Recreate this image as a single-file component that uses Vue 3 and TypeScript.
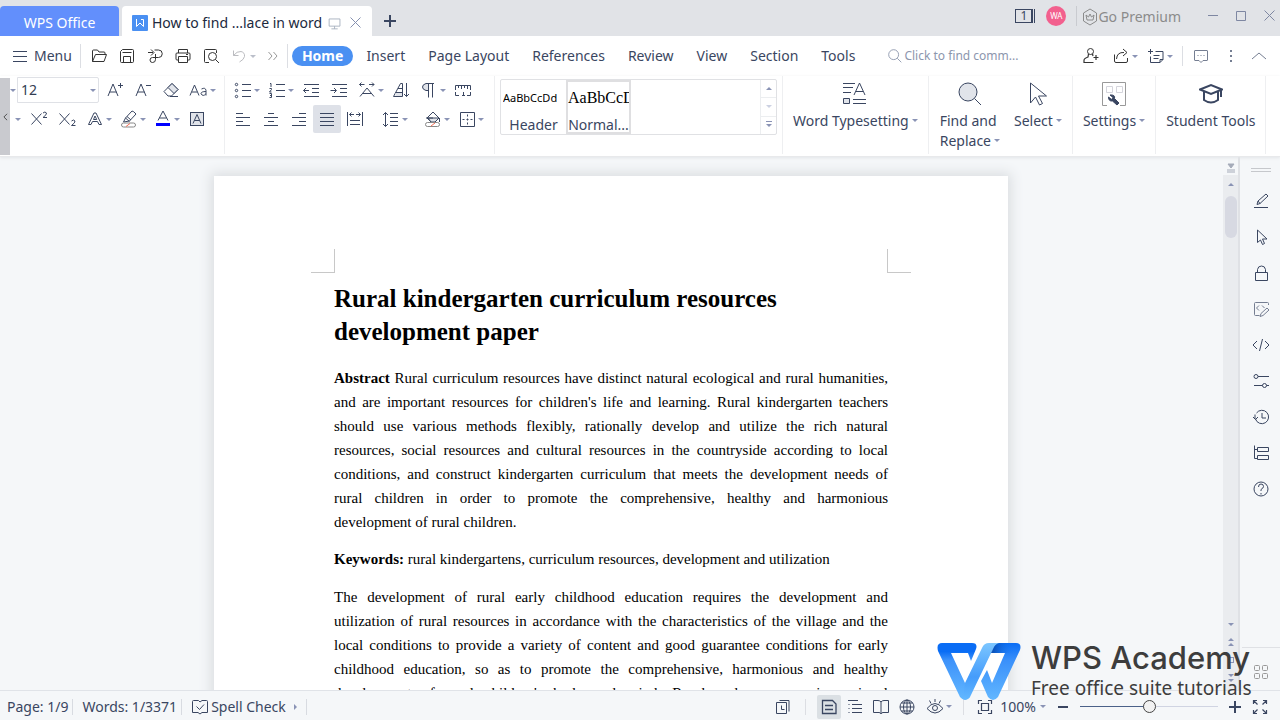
<script setup lang="ts">
import { ref } from 'vue'

interface Tool {
  icon: string
  label: string
  caret?: boolean
  active?: boolean
  spaced?: boolean
}

const lines = (rows: number[][]): string => rows.map(([x, y, w]) => `<path d="M${x} ${y}.5h${w}"/>`).join('')

const icons: Record<string, string> = {
  present: '<path d="M3.5 5.500h12v8h-12zM9.500 13.500v3M6 16.500h7"/>',
  close: '<path d="M4.500 4.500l10 10M14.500 4.500l-10 10"/>',
  plus: '<path d="M10 4v12M4 10h12" stroke-width="2"/>',
  minus: '<path d="M5 10h10" stroke-width="2"/>',
  minimize: '<path d="M5 9.500h10"/>',
  maximize: '<path d="M5.500 5.500h9v9h-9z"/>',
  menu: lines([[3, 5, 14], [3, 10, 14], [3, 15, 14]]),
  open: '<path d="M3.500 15.500V5q0-1 1-1h4l1.500 2h5q1 0 1 1v1.500M3.500 15.500l3-7h11l-2.500 7z"/>',
  save: '<path d="M3.500 5.500l2-2h10q1 0 1 1v11q0 1-1 1h-11q-1 0-1-1zM5.500 6.500h9M6.500 16v-5.500h7V16"/>',
  output: '<path d="M3 6.500h5M6 3.500l3 3-3 3M9.500 4h4a3.500 3.500 0 010 7.500h-6a2.500 2.500 0 100 5q3 0 3-3V8"/>',
  print: '<path d="M5.500 7V3.500h9V7M5 14H4q-1 0-1-1V8q0-1 1-1h12q1 0 1 1v5q0 1-1 1h-1M5.500 10.500h9v6h-9zM13 8.500h2"/>',
  preview: '<path d="M8 16.500H4.500q-1 0-1-1v-11q0-1 1-1h10q1 0 1 1V7"/><circle cx="11.500" cy="10.500" r="4"/><path d="M14.500 13.500l3.500 3.500"/>',
  undo: '<path d="M4.500 4.500v5h5M4.500 9.500Q8 5 12 5.500q4 1 3.500 5-.5 3-5 5.500"/>',
  more: '<path d="M5.500 6l3.500 4-3.500 4M10.500 6l3.500 4-3.500 4"/>',
  search: '<circle cx="8.500" cy="8.500" r="5.500"/><path d="M12.500 12.500l4.500 4.500"/>',
  user: '<circle cx="9.500" cy="5.500" r="3"/><path d="M7.500 8l-.5 3Q2.500 12.500 3 15v1.500h9.500M11.500 8l.5 2M15 9v5M12.500 11.500h5" stroke-width="1.200"/>',
  share: '<path d="M3.500 8.500v6.500q0 1.500 1.500 1.500h10q1.500 0 1.500-1.500v-3M5.500 13Q6 6 13 6.500M12 3l4 3.500-4 3.500"/>',
  addnote: '<path d="M4.500 3v5M2 5.500h5M9.500 5.500h7.500v8l-3 3H4.500v-6M7.500 9.500h6M7.500 12.500h5M14 16.500v-3h3"/>',
  chat: '<path d="M4 4.500h12q.5 0 .5.500v9q0 .5-.5.500h-4l-2 2-2-2H4q-.5 0-.5-.5V5q0-.5.500-.5zM6.500 9.500h1M9.500 9.500h1M12.500 9.500h1"/>',
  dots: '<path d="M10 4v2M10 9v2M10 14v2" stroke-width="2"/>',
  up: '<path d="M3 13l7-6 7 6"/>',
  fontUp: '<path d="M3 16L8 4l5 12M4.500 12h7M15.500 3v5M13 5.500h5"/>',
  fontDown: '<path d="M3 16L8 4l5 12M4.500 12h7M13 5.500h5"/>',
  eraser: '<path d="M3 11.500l8-8 6 6-6.500 6.500H7zM9 16.500h8"/><path d="M7 7.500l4-4 6 6-4 4z" fill="#e1e4ea"/>',
  aa: '<path d="M1 15.500L5.500 5l4.500 10.500M3 12h5M12.500 9q4-2 4.500 1.500v5M17 11.500q-5 0-5 2.200 2 3.500 5 0"/>',
  sup: '<path d="M2.500 4.500l10 11M12.500 4.500l-10 11M14 4q2-2 3.500 0 .5 1.500-3.500 4.500h4"/>',
  sub: '<path d="M2.500 4.500l10 11M12.500 4.500l-10 11M14.500 12q2-2 3.500 0 .5 1.500-3.500 4.500h4"/>',
  textfx: '<path d="M3.500 15.500L9 4h2l5.500 11.500h-2.500l-1.500-3h-5l-1.500 3zM8.500 10.500L10 7l1.700 3.500z"/>',
  marker: '<path d="M4.500 13l2-4 6.500-7q1.500 0 4 3l-6.500 7zM6.500 9l4 3.500M8 7.500l4 3.500"/><rect x="2.500" y="14" width="14" height="4" rx="2" stroke="#888"/><path d="M7 17.500l4-3" stroke="#f56e55"/>',
  color: '<path d="M5 11.500L10 2l5 9.500M6.500 9h7"/><path d="M3 15.500h14" stroke="#0000ff" stroke-width="3"/>',
  boxA: '<rect x="3.500" y="3.500" width="13" height="13" fill="#e1e4ea"/><path d="M6 14.500l4-9 4 9M7.500 11.500h5"/>',
  bullets: '<circle cx="3.500" cy="4.500" r="1.200"/><circle cx="3.500" cy="10.500" r="1.200"/><circle cx="3.500" cy="16.500" r="1.200"/>' + lines([[9, 4, 9], [9, 10, 9], [9, 16, 9]]),
  numbers: '<path d="M3 3.500h1V7M2.500 8.500h2v1l-2 2.500h2M2.500 13.500h2v4h-2M3 15.500h1.500"/>' + lines([[9, 4, 9], [9, 10, 9], [9, 16, 9]]),
  outdent: lines([[3, 4, 15], [11, 8, 7], [11, 12, 7], [3, 16, 15]]) + '<path d="M2.500 10.500H8M5 8l-2.500 2.500L5 13"/>',
  indent: lines([[3, 4, 15], [11, 8, 7], [11, 12, 7], [3, 16, 15]]) + '<path d="M1.500 10.500H7M5 8l2.500 2.500L5 13"/>',
  scale: '<path d="M2.500 4.500h5M4.500 2.500l-2 2 2 2M12 4.500h5M15 2.500l2 2-2 2M3 16.500L10 8l7 8.500M6 13.500h8"/>',
  sort: '<path d="M2.500 16.500L9.500 3.500h2v13z" /><path d="M4.500 16v-3h6.500v3z" fill="#e1e4ea" stroke="none"/><path d="M4.500 12.500h7M7 8.500h4.500M15.500 3v13.500M13 14l2.500 2.500L18 14"/>',
  para: '<path d="M9.500 3.500H7q-3.500 1-3.500 3.500T7 10.500h2.500z" fill="#e1e4ea"/><path d="M9 3.500h6M9.500 3.500v14M13.500 3.500v14"/>',
  ruler: '<path d="M2.500 10V5.500h15V10M5.500 6v2M8.500 6v3M11.500 6v2M14.500 6v3M2.500 12v3.500H6M14 15.500h3.500V12M9 15.500h3M10.500 12v3"/>',
  alignL: lines([[3, 4, 7], [3, 8, 14], [3, 12, 7], [3, 16, 14]]),
  alignC: lines([[7, 4, 6], [3, 8, 14], [7, 12, 6], [3, 16, 14]]),
  alignR: lines([[10, 4, 7], [3, 8, 14], [10, 12, 7], [3, 16, 14]]),
  alignJ: lines([[3, 4, 14], [3, 8, 14], [3, 12, 14], [3, 16, 14]]),
  spread: '<path d="M2.500 3v14M17.500 3v14M4.500 5.500H9M6.500 3.500l-2 2 2 2M11 5.500h4.500M13.500 3.500l2 2-2 2M5 11.500h10M5 15.500h10"/>',
  spacing: '<path d="M4.500 3.500v14M2 6l2.500-2.500L7 6M2 15l2.500 2.500L7 15"/>' + lines([[9, 4, 8], [9, 8, 8], [9, 12, 8], [9, 16, 8]]),
  fill: '<path d="M4 9l6-6 6 6-4 4H8z" /><path d="M5 9h11l-4 4H8z" fill="#e1e4ea"/><path d="M3 9h7M16.500 9v4"/><rect x="2.500" y="13.500" width="14" height="4" rx="2" stroke="#888"/><path d="M8 17l4-3" stroke="#f56e55"/>',
  border: '<path d="M3.500 3.500h14v14h-14z"/><path d="M10.500 5.500v10M5.500 10.500h10" stroke-dasharray="2 2"/>',
  read: '<path d="M3 16.500h14M6 13.500l1-3.500 8-7 2 2-8 7.500zM7 10l2 2.500"/>',
  pointer: '<path d="M6.500 3v12.500l3-2.500 2 4.500 2-1-2-4.500h4.500z"/>',
  lock: '<path d="M4.500 9.500h12v8h-12zM6.500 9V6.500Q7 3 10.500 3t4 3.500V9"/>',
  codeEdit: '<path d="M8.500 16.500h-4q-1 0-1-1v-11q0-1 1-1h12q1 0 1 1V6M8 6.500L5.500 9 8 11.500M11 6.500L13.500 9M9 17.500l1-3 6-5.500 2 2-6 5.500z"/>',
  code: '<path d="M6 6l-4 4 4 4M14 6l4 4-4 4M11.500 4l-3 12"/>',
  sliders: '<circle cx="5" cy="5.500" r="2"/><circle cx="13.500" cy="14.500" r="2"/><path d="M7 5.500h11M3 14.500h8.500M15.500 14.500H18"/>',
  history: '<path d="M4.500 12a6.700 6.700 0 101-6M4 7.500V12M2 10l2.500 2.500L7 10M11 6v5h4"/>',
  tree: '<path d="M3.500 2.500v13h3M3.500 6.500h3M6.500 4.500h11v4h-11zM6.500 12.500h11v4h-11z"/>',
  help: '<circle cx="10" cy="10" r="7"/><path d="M7.500 8q0-3 2.500-3t2.500 2.500q0 1.500-2.500 3V12M10 14v1.500"/>',
  apps: '<rect x="3.500" y="3.500" width="5" height="5" rx="1"/><rect x="11.500" y="3.500" width="5" height="5" rx="1"/><rect x="3.500" y="11.500" width="5" height="5" rx="1"/><rect x="11.500" y="11.500" width="5" height="5" rx="1"/>',
  spell: '<path d="M8.500 3.500h-5q-1 0-1 1v11H8l2 1.500 2-1.500h5.500v-11q0-1-1-1H12l-2 1.500-1.500-1.500M6.500 9.500l3 3 4.500-5"/>',
  backup: '<path d="M3.500 5.500h10v11h-10zM6.500 3.500h9.500v11M8.500 8.500v4h3"/>',
  pageView: '<path d="M3.500 3.500h10l3.500 3.500v9.500H3.500zM6 8.500h8M6 12.500h8" stroke-width="1.300"/>',
  outline: lines([[3, 3, 10], [7, 7, 10], [7, 11, 10], [7, 15, 10]]) + '<path d="M3.500 7.500h1M3.500 11.500h1M3.500 15.500h1"/>',
  book: '<path d="M10 5q-1-1.500-3-1.500H2.500v12H8q1.500 0 2 1.500.5-1.500 2-1.500h5.500v-12H13q-2 0-3 1.500v11"/>',
  globe: '<circle cx="10" cy="10" r="7"/><ellipse cx="10" cy="10" rx="3.500" ry="7"/><path d="M3 10h14M10 3v14M4.500 6h11M4.500 14h11"/>',
  eye: '<path d="M2 11.500q8-10 16 0-8 9-16 0z"/><circle cx="10" cy="11" r="2.500"/><path d="M10 2v3M4.500 3.500l1.500 3M15.500 3.500L14 6.500"/>',
  fit: '<path d="M3.500 7V3.500H7M13 3.500h3.500V7M16.500 13v3.500H13M7 16.500H3.500V13M6.500 6.500h7v7h-7z" stroke-width="1.200"/>',
  full: '<path d="M3.500 7V3.500H7M3.500 3.500l4 4M13 3.500h3.500V7M16.500 3.500l-4 4M16.500 13v3.500H13M16.500 16.500l-4-4M7 16.500H3.500V13M3.500 16.500l4-4" stroke-width="1.200"/>',
}

const quick: Tool[] = [
  { icon: 'open', label: 'Open' },
  { icon: 'save', label: 'Save' },
  { icon: 'output', label: 'Export to PDF' },
  { icon: 'print', label: 'Print' },
  { icon: 'preview', label: 'Print preview' },
]
const menus = ['Home', 'Insert', 'Page Layout', 'References', 'Review', 'View', 'Section', 'Tools']
const activeMenu = ref('Home')

const fontTop: Tool[] = [
  { icon: 'fontUp', label: 'Increase font size' },
  { icon: 'fontDown', label: 'Decrease font size' },
  { icon: 'eraser', label: 'Clear formatting' },
  { icon: 'aa', label: 'Change case', caret: true },
]
const fontBottom: Tool[] = [
  { icon: 'sup', label: 'Superscript' },
  { icon: 'sub', label: 'Subscript' },
  { icon: 'textfx', label: 'Text effects', caret: true },
  { icon: 'marker', label: 'Highlight', caret: true },
  { icon: 'color', label: 'Font color', caret: true },
  { icon: 'boxA', label: 'Character shading' },
]
const paraTop: Tool[] = [
  { icon: 'bullets', label: 'Bullets', caret: true },
  { icon: 'numbers', label: 'Numbering', caret: true },
  { icon: 'outdent', label: 'Decrease indent' },
  { icon: 'indent', label: 'Increase indent' },
  { icon: 'scale', label: 'Character scaling', caret: true },
  { icon: 'sort', label: 'Sort' },
  { icon: 'para', label: 'Show marks', caret: true },
  { icon: 'ruler', label: 'Tabs' },
]
const paraBottom: Tool[] = [
  { icon: 'alignL', label: 'Align left' },
  { icon: 'alignC', label: 'Center' },
  { icon: 'alignR', label: 'Align right' },
  { icon: 'alignJ', label: 'Justify', active: true },
  { icon: 'spread', label: 'Distribute' },
  { icon: 'spacing', label: 'Line spacing', caret: true, spaced: true },
  { icon: 'fill', label: 'Shading', caret: true, spaced: true },
  { icon: 'border', label: 'Borders', caret: true },
]
const side = ['read', 'pointer', 'lock', 'codeEdit', 'code', 'sliders', 'history', 'tree', 'help']

const abstractLines = [
  'Rural curriculum resources have distinct natural ecological and rural humanities,',
  "and are important resources for children's life and learning. Rural kindergarten teachers",
  'should use various methods flexibly, rationally develop and utilize the rich natural',
  'resources, social resources and cultural resources in the countryside according to local',
  'conditions, and construct kindergarten curriculum that meets the development needs of',
  'rural children in order to promote the comprehensive, healthy and harmonious',
  'development of rural children.',
]
const bodyLines = [
  'The development of rural early childhood education requires the development and',
  'utilization of rural resources in accordance with the characteristics of the village and the',
  'local conditions to provide a variety of content and good guarantee conditions for early',
  'childhood education, so as to promote the comprehensive, harmonious and healthy',
  "development of rural children's body and mind. Rural and resources in regional",
]
const fontSize = ref('12')
const zoom = ref(50)
</script>

<template>
  <div class="app">
    <header class="titlebar">
      <button class="tab office">WPS Office</button>
      <div class="tab doc-tab">
        <svg class="doc-logo" viewBox="0 0 16 16"><rect width="16" height="16" rx="1" /><path d="M4.500 4v7.500L8 8l3.500 3.500V4.500H9" /></svg>
        <span>How to find ...lace in word</span>
        <svg class="ico small pale" viewBox="0 0 20 20" v-html="icons.present"></svg>
        <button class="plain" aria-label="Close tab"><svg class="ico violet" viewBox="0 0 20 20" v-html="icons.close"></svg></button>
      </div>
      <button class="plain new-tab" aria-label="New tab"><svg class="ico" viewBox="0 0 20 20" v-html="icons.plus"></svg></button>
      <div class="account">
        <button class="windows" aria-label="Windows"><span>1</span></button>
        <span class="avatar">WA</span>
        <span class="divider"></span>
        <button class="plain premium">
          <svg viewBox="0 0 16 18"><path d="M8 1l6.500 4v8L8 17l-6.500-4V5zM4 7l1 5h6l1-5-2.500 2L8 6 6.500 9z" /></svg>Go Premium
        </button>
        <button class="plain win" aria-label="Minimize"><svg class="ico" viewBox="0 0 20 20" v-html="icons.minimize"></svg></button>
        <button class="plain win" aria-label="Maximize"><svg class="ico" viewBox="0 0 20 20" v-html="icons.maximize"></svg></button>
        <button class="plain win last" aria-label="Close"><svg class="ico" viewBox="0 0 20 20" v-html="icons.close"></svg></button>
      </div>
    </header>

    <nav class="menubar">
      <button class="plain menu-btn"><svg class="ico" viewBox="0 0 20 20" v-html="icons.menu"></svg>Menu</button>
      <span class="divider"></span>
      <div class="quick">
        <button v-for="t in quick" :key="t.icon" class="tool" :aria-label="t.label"><svg class="ico dark" viewBox="0 0 20 20" v-html="icons[t.icon]"></svg></button>
        <button class="tool with-caret faded" aria-label="Undo"><svg class="ico" viewBox="0 0 20 20" v-html="icons.undo"></svg><i class="caret"></i></button>
        <button class="tool" aria-label="More"><svg class="ico grey" viewBox="0 0 20 20" v-html="icons.more"></svg></button>
      </div>
      <span class="divider"></span>
      <div class="menus">
        <button v-for="m in menus" :key="m" :class="['menu', { active: m === activeMenu }]" @click="activeMenu = m">{{ m }}</button>
      </div>
      <label class="search">
        <svg class="ico small" viewBox="0 0 20 20" v-html="icons.search"></svg>
        <input type="text" placeholder="Click to find comm..." aria-label="Find commands" />
      </label>
      <div class="menu-right">
        <button class="tool invite" aria-label="Invite"><svg class="ico dark" viewBox="0 0 20 20" v-html="icons.user"></svg></button>
        <button class="tool with-caret share" aria-label="Share"><svg class="ico dark" viewBox="0 0 20 20" v-html="icons.share"></svg><i class="caret"></i></button>
        <button class="tool with-caret" aria-label="Add note"><svg class="ico" viewBox="0 0 20 20" v-html="icons.addnote"></svg><i class="caret"></i></button>
        <span class="divider"></span>
        <button class="tool comments" aria-label="Comments"><svg class="ico slate" viewBox="0 0 20 20" v-html="icons.chat"></svg></button>
        <button class="tool" aria-label="Options"><svg class="ico slate" viewBox="0 0 20 20" v-html="icons.dots"></svg></button>
        <button class="tool" aria-label="Collapse ribbon"><svg class="ico slate" viewBox="0 0 20 20" v-html="icons.up"></svg></button>
      </div>
    </nav>

    <section class="ribbon">
      <button class="scroll-left" aria-label="Scroll ribbon left"><svg viewBox="0 0 6 10"><path d="M5 1L1 5l4 4" /></svg></button>
      <div class="group font-group">
        <div class="row">
          <span class="font-end"><i class="caret"></i></span>
          <div class="size-box">
            <select v-model="fontSize" aria-label="Font size"><option>10</option><option>12</option><option>14</option></select>
            <i class="caret"></i>
          </div>
          <button v-for="t in fontTop" :key="t.icon" :class="['tool', { 'with-caret': t.caret }]" :aria-label="t.label">
            <svg class="ico" viewBox="0 0 20 20" v-html="icons[t.icon]"></svg><i v-if="t.caret" class="caret"></i>
          </button>
        </div>
        <div class="row">
          <span class="underline-end"><i class="caret"></i></span>
          <button v-for="t in fontBottom" :key="t.icon" :class="['tool', { 'with-caret': t.caret }]" :aria-label="t.label">
            <svg class="ico" viewBox="0 0 20 20" v-html="icons[t.icon]"></svg><i v-if="t.caret" class="caret"></i>
          </button>
        </div>
      </div>
      <div class="group para-group">
        <div v-for="(row, i) in [paraTop, paraBottom]" :key="i" class="row">
          <button v-for="t in row" :key="t.icon" :class="['tool', { 'with-caret': t.caret, active: t.active, spaced: t.spaced }]" :aria-label="t.label">
            <svg class="ico" viewBox="0 0 20 20" v-html="icons[t.icon]"></svg><i v-if="t.caret" class="caret"></i>
          </button>
        </div>
      </div>
      <div class="group style-group">
        <div class="gallery">
          <button class="style-card"><span class="sample sans">AaBbCcDd</span><span class="name">Header</span></button>
          <button class="style-card chosen"><span class="sample serif">AaBbCcDd</span><span class="name">Normal...</span></button>
          <div class="gallery-nav">
            <button aria-label="Previous styles"><i class="caret flip"></i></button>
            <button class="dim" aria-label="Next styles"><i class="caret"></i></button>
            <button class="all" aria-label="All styles"><i class="caret"></i></button>
          </div>
        </div>
      </div>
      <div class="group">
        <button class="big">
          <svg viewBox="0 0 24 24"><path d="M0 1.500h12M0 5.500h10M0 10.500h8M11 13l5.500-12L22 13M13 9.500h7M10 17.500h13M10 21.500h13" /><path class="soft" d="M.5 16.500h6v5h-6z" /></svg>
          <span>Word Typesetting<i class="caret"></i></span>
        </button>
      </div>
      <div class="group find-group">
        <button class="big left">
          <svg viewBox="0 0 24 24"><circle class="soft" cx="10" cy="10" r="9" /><path d="M16.500 16.500l6.500 6.500" /></svg>
          <span>Find and<br />Replace<i class="caret"></i></span>
        </button>
        <button class="big">
          <svg viewBox="0 0 24 24"><path d="M4.500 1v20l5-6 4 8 3-1.500-4-7.500h8z" /></svg>
          <span>Select<i class="caret"></i></span>
        </button>
      </div>
      <div class="group">
        <button class="big">
          <svg viewBox="0 0 24 24"><path class="frame" d="M5 23.500H.5V.5h23v23H18" /><path class="faint" d="M4.500 4.500h6v6h-6zM14.500 4.500h6v6h-6z" /><path class="solid" d="M8 13l3 2.500-1.500 2L6.500 15q0 4.500 4 4l4.500 4 2-2-4.500-4.500q1-4-4.500-3.500z" /></svg>
          <span>Settings<i class="caret"></i></span>
        </button>
      </div>
      <div class="group">
        <button class="big cap">
          <svg viewBox="0 0 24 24"><path d="M1 7.500L12 3l11 4.500L12 12zM5 10v8q7 5 14 0v-8M22 8v7" /></svg>
          <span>Student Tools</span>
        </button>
      </div>
    </section>

    <main class="workspace">
      <div class="canvas">
        <article class="page">
          <div class="crop-marks"><span></span><span></span></div>
          <div class="content">
            <h1>Rural kindergarten curriculum resources<br />development paper</h1>
            <p>
              <span v-for="(l, i) in abstractLines" :key="i" class="line"><b v-if="i === 0">Abstract </b>{{ l }}</span>
            </p>
            <p><span class="line"><b>Keywords:</b> rural kindergartens, curriculum resources, development and utilization</span></p>
            <p class="running"><span v-for="(l, i) in bodyLines" :key="i" class="line">{{ l }}</span></p>
          </div>
        </article>
      </div>
      <div class="scrollbar">
        <span class="ruler-toggle"><svg viewBox="0 0 10 10"><path d="M2 1h6L5 5zM1 7h8M1 9h8" /></svg></span>
        <button aria-label="Scroll up"><i class="caret flip"></i></button>
        <span class="thumb"></span>
        <div class="scroll-end">
          <button aria-label="Scroll down"><i class="caret"></i></button>
          <button aria-label="Previous page"><i class="caret flip"></i><i class="caret flip"></i></button>
          <button aria-label="Browse object"><span class="square"></span></button>
          <button aria-label="Next page"><i class="caret"></i><i class="caret"></i></button>
        </div>
      </div>
      <aside class="side">
        <span class="grip"></span>
        <button v-for="s in side" :key="s" class="plain" :aria-label="s"><svg :class="['ico', { slate: s === 'codeEdit' }]" viewBox="0 0 20 20" v-html="icons[s]"></svg></button>
        <button class="plain apps" aria-label="Apps"><svg class="ico grey" viewBox="0 0 20 20" v-html="icons.apps"></svg></button>
      </aside>
    </main>

    <footer class="statusbar">
      <span class="stat">Page: 1/9</span>
      <span class="stat">Words: 1/3371</span>
      <button class="stat spell"><svg class="ico" viewBox="0 0 20 20" v-html="icons.spell"></svg>Spell Check<i class="caret side-caret"></i></button>
      <div class="status-right">
        <button class="tool" aria-label="Backup"><svg class="ico" viewBox="0 0 20 20" v-html="icons.backup"></svg></button>
        <span class="divider"></span>
        <button class="view active" aria-label="Page view"><svg class="ico" viewBox="0 0 20 20" v-html="icons.pageView"></svg></button>
        <button class="view" aria-label="Outline"><svg class="ico" viewBox="0 0 20 20" v-html="icons.outline"></svg></button>
        <button class="view" aria-label="Reading"><svg class="ico" viewBox="0 0 20 20" v-html="icons.book"></svg></button>
        <button class="view" aria-label="Web layout"><svg class="ico" viewBox="0 0 20 20" v-html="icons.globe"></svg></button>
        <button class="tool with-caret eye" aria-label="Eye protection"><svg class="ico" viewBox="0 0 20 20" v-html="icons.eye"></svg><i class="caret"></i></button>
        <span class="divider"></span>
        <button class="plain" aria-label="Fit page"><svg class="ico" viewBox="0 0 20 20" v-html="icons.fit"></svg></button>
        <button class="plain percent">100%<i class="caret"></i></button>
        <button class="plain" aria-label="Zoom out"><svg class="ico" viewBox="0 0 20 20" v-html="icons.minus"></svg></button>
        <input v-model="zoom" type="range" min="0" max="100" aria-label="Zoom" />
        <button class="plain" aria-label="Zoom in"><svg class="ico" viewBox="0 0 20 20" v-html="icons.plus"></svg></button>
        <button class="plain" aria-label="Full screen"><svg class="ico" viewBox="0 0 20 20" v-html="icons.full"></svg></button>
      </div>
    </footer>

    <div class="brand">
      <svg viewBox="0 0 84 58">
        <defs>
          <linearGradient id="arm" x1="0" y1="0" x2="0" y2="1"><stop offset="0.150" stop-color="#0a6df5" /><stop offset="0.300" stop-color="#3d92fa" /><stop offset="1" stop-color="#63b8ff" /></linearGradient>
          <linearGradient id="arm2" gradientUnits="userSpaceOnUse" x1="0" y1="0" x2="0" y2="58"><stop offset="0" stop-color="#0a6df5" /><stop offset="0.300" stop-color="#3a90fa" /><stop offset="1" stop-color="#63b8ff" /></linearGradient>
          <linearGradient id="ribbon" x1="0" y1="0" x2="0" y2="1"><stop offset="0" stop-color="#7cc6ff" /><stop offset="0.600" stop-color="#459cfb" /><stop offset="1" stop-color="#63b8ff" /></linearGradient>
          <linearGradient id="fold" x1="0" y1="0" x2="1" y2="0"><stop offset="0" stop-color="#0446a8" /><stop offset="1" stop-color="#1578f8" stop-opacity="0" /></linearGradient>
        </defs>
        <path fill="url(#arm)" d="M5 0H35q6 0 4 6L34 18L31 10H14L28 40L33 54q-5 6-10 0L1 8Q-1 0 5 0z" />
        <path fill="url(#arm2)" d="M44 38l6-11 5 13L68 10H55L58 0h21q6 0 4 7L61 54q-5 6-10 0z" />
        <path fill="url(#fold)" d="M58 0h18v10H53z" />
        <path fill="url(#ribbon)" d="M28 40L45 5q2-5 7-5h10q-4 1-6 6L33 54q-3 4-7 2z" />
      </svg>
      <div class="brand-text"><strong>WPS Academy</strong><span>Free office suite tutorials</span></div>
    </div>
  </div>
</template>

<style>
body {
  margin: 0;
}
</style>

<style scoped>
.app {
  --ink: #3a4661;
  --caret: #8a93b5;
  position: relative;
  display: flex;
  flex-direction: column;
  height: 100vh;
  overflow: hidden;
  color: var(--ink);
  background: #fff;
  font: 14px/20px 'Noto Sans', 'Open Sans', sans-serif;
}
.app * {
  box-sizing: border-box;
}
button {
  margin: 0;
  padding: 0;
  border: 0;
  background: none;
  color: inherit;
  font: inherit;
}
button,
.row,
.titlebar,
.menubar,
.account,
.quick,
.menus,
.menu-right,
.status-right {
  display: flex;
  align-items: center;
}
.ico {
  display: block;
  flex: none;
  width: 20px;
  height: 20px;
  fill: none;
  stroke: currentColor;
}
.small {
  width: 18px;
  height: 18px;
}
.dark {
  color: #333;
}
.grey {
  color: #999;
}
.pale {
  color: #a5afbd;
}
.slate {
  color: #757e92;
}
.violet {
  color: #8590b0;
}
.caret {
  flex: none;
  display: inline-block;
  border: 3px solid transparent;
  border-top-color: var(--caret);
  border-bottom-width: 0;
}
.caret.flip {
  border-width: 0 3px 3px;
  border-bottom-color: var(--caret);
}
.divider {
  flex: none;
  width: 1px;
  height: 24px;
  background: #dcdee3;
}

.titlebar {
  flex: none;
  height: 36px;
  background: #e1e3e7;
}
.tab {
  align-self: flex-end;
  height: 30px;
  padding-top: 4px;
  border-radius: 4px 4px 0 0;
}
.office {
  justify-content: center;
  width: 119px;
  margin-right: 3px;
  background: #628ffc;
  color: #fff;
}
.doc-tab {
  display: flex;
  align-items: center;
  width: 250px;
  padding-left: 10px;
  background: #fff;
}
.doc-tab > span {
  margin: 0 4px;
  color: #20293d;
}
.doc-tab > button {
  margin-left: auto;
  margin-right: 6px;
}
.doc-logo {
  width: 16px;
  height: 16px;
  fill: #4a90f2;
}
.doc-logo path {
  fill: none;
  stroke: #fff;
}
.new-tab {
  margin: 6px 0 0 8px;
}
.account {
  align-self: flex-start;
  height: 32px;
  margin-left: auto;
}
.windows {
  width: 20px;
  height: 14px;
  border-right: 1px solid var(--ink);
}
.windows span {
  width: 18px;
  height: 14px;
  border: 1px solid var(--ink);
  border-right-width: 2px;
  font-size: 12px;
  line-height: 12px;
}
.avatar {
  width: 20px;
  height: 20px;
  margin: 0 10px 0 11px;
  border-radius: 50%;
  background: #f2608e;
  color: #fff;
  font-size: 8px;
  text-align: center;
}
.account .divider {
  height: 20px;
  background: #c9cbd0;
}
.premium {
  margin: 2px 18px 0 5px;
  color: #8b8b8b;
}
.premium svg {
  width: 16px;
  height: 18px;
  fill: none;
  stroke: currentColor;
}
.win {
  width: 28px;
  justify-content: center;
  color: #7e87a2;
}
.win.last {
  width: 20px;
  margin-left: 5px;
}

.menubar {
  flex: none;
  height: 40px;
}
.menu-btn {
  gap: 4px;
  margin: 0 8px 0 10px;
}
.quick {
  padding-left: 4px;
}
.quick + .divider {
  margin-right: 4px;
}
.menus {
  gap: 3px;
}
.menu {
  height: 20px;
  padding: 0 10px;
  border-radius: 10px;
}
.menu.active {
  background: #4a90f2;
  color: #fff;
  font-weight: 700;
}
.tool {
  flex: none;
  width: 28px;
  height: 28px;
  padding: 0 4px;
  border-radius: 2px;
}
.tool.with-caret {
  width: 34px;
  padding-right: 3px;
  gap: 1px;
}
.tool.active {
  background: #dee1e8;
}
.tool.spaced {
  margin-left: 8px;
}
.faded {
  color: #bbbcc0;
  --caret: #bbbfca;
}
.search {
  display: flex;
  align-items: center;
  margin-left: 21px;
  color: #8c96ad;
}
.search input {
  width: 130px;
  padding: 0;
  border: 0;
  outline: 0;
  background: none;
  color: #8c96ad;
  font: 12px/20px 'Noto Sans', sans-serif;
}
.search input::placeholder {
  color: #8c96ad;
}
.menu-right {
  margin-left: auto;
  margin-right: 7px;
}
.menu-right .divider {
  height: 20px;
  margin: 0 4px 0 6px;
}
.invite,
.comments {
  margin-right: 2px;
}
.share {
  margin-right: 1px;
}

.ribbon {
  position: relative;
  z-index: 1;
  flex: none;
  display: flex;
  height: 81px;
  border-bottom: 1px solid #e8e9eb;
  box-shadow: 0 1px 3px #e3e5e8;
  background: #fff;
}
.scroll-left {
  flex: none;
  width: 10px;
  height: 77px;
  margin-top: 2px;
  justify-content: center;
  background: #c9cacf;
}
.scroll-left svg {
  width: 5px;
  height: 8px;
  fill: none;
  stroke: #333;
}
.group {
  flex: none;
  height: 78px;
  padding: 0 10px;
  border-right: 1px solid #eeeff1;
}
.row {
  height: 28px;
  margin-bottom: 1px;
}
.font-group {
  width: 215px;
  padding: 0;
}
.font-end {
  display: flex;
  width: 7px;
  overflow: hidden;
}
.underline-end {
  display: flex;
  width: 15px;
  padding-left: 5px;
}
.size-box {
  display: flex;
  align-items: center;
  width: 82px;
  height: 26px;
  margin-right: 2px;
  border: 1px solid #dfe1e6;
  border-radius: 0 2px 2px 0;
}
.size-box select {
  flex: 1;
  min-width: 0;
  padding: 0 3px;
  border: 0;
  outline: 0;
  appearance: none;
  background: none;
  color: #333d52;
  font: inherit;
}
.size-box .caret {
  margin-right: 2px;
}
.para-group {
  width: 270px;
  padding: 0 0 0 4px;
}
.style-group {
  width: 288px;
  padding: 3px 5px;
}
.gallery {
  display: flex;
  height: 56px;
  border: 1px solid #e0e1e4;
  border-radius: 2px;
}
.style-card {
  flex-direction: column;
  align-items: flex-start;
  width: 65px;
  padding: 0 2px;
  overflow: hidden;
}
.style-card.chosen {
  box-shadow: inset 0 0 0 2px #dfdfe1;
}
.sample {
  height: 36px;
  width: 61px;
  overflow: hidden;
  color: #000;
  text-align: left;
  line-height: 36px;
}
.sample.sans {
  font-size: 11px;
}
.sample.serif {
  font: 16px/36px 'Liberation Serif', serif;
}
.name {
  align-self: center;
  line-height: 18px;
}
.gallery-nav {
  display: flex;
  flex-direction: column;
  width: 16px;
  margin-left: auto;
  border-left: 1px solid #eceef0;
}
.gallery-nav button {
  flex: 1;
  justify-content: center;
}
.gallery-nav button + button {
  border-top: 1px solid #eceef0;
}
.gallery-nav .dim {
  --caret: #ccd1e2;
}
.gallery-nav .all .caret {
  position: relative;
}
.gallery-nav .all .caret::before {
  content: '';
  position: absolute;
  left: -3px;
  top: -6px;
  width: 6px;
  height: 1px;
  background: var(--caret);
}
.find-group {
  display: flex;
  gap: 14px;
  padding-left: 11px;
}
.big {
  flex-direction: column;
  padding-top: 6px;
}
.big > svg {
  width: 24px;
  height: 24px;
  margin-bottom: 5px;
  fill: none;
  stroke: var(--ink);
}
.big .soft {
  fill: #e1e4ea;
}
.big .frame {
  stroke: #999;
}
.big .faint {
  stroke: #d5d5dc;
}
.big .solid {
  fill: var(--ink);
}
.big.cap > svg {
  stroke-width: 2;
}
.big > span {
  text-align: left;
}
.big .caret {
  margin-left: 3px;
  vertical-align: 4px;
}

.workspace {
  flex: 1;
  min-height: 0;
  display: flex;
  background: #f5f7f9;
}
.canvas {
  flex: 1;
  display: flex;
  justify-content: center;
  padding: 19px 1px 0 0;
  overflow: hidden;
}
.page {
  flex: none;
  width: 794px;
  height: 1123px;
  padding-top: 73px;
  background: #fff;
  box-shadow: 0 0 12px 3px #dadde0;
}
.crop-marks {
  display: flex;
  justify-content: space-between;
  padding: 0 97px;
}
.crop-marks span {
  width: 24px;
  height: 24px;
  border: solid #c8c8c8;
  border-width: 0 1px 1px 0;
}
.crop-marks span + span {
  border-width: 0 0 1px 1px;
}
.content {
  padding: 9px 120px;
  color: #000;
  font: 15px/24px 'Liberation Serif', serif;
}
h1 {
  margin: 0 0 18px;
  font-size: 25px;
  line-height: 33px;
}
p {
  margin: 0 0 13px;
}
.running {
  margin-top: 14px;
}
.line {
  display: block;
  text-align-last: justify;
}
.line:last-child {
  text-align-last: left;
}
.running .line:last-child {
  text-align-last: justify;
}
.scrollbar {
  display: flex;
  flex-direction: column;
  align-items: center;
  width: 15px;
  background: #eaecef;
}
.scrollbar button {
  flex-direction: column;
  justify-content: center;
  gap: 2px;
  width: 100%;
  height: 18px;
}
.ruler-toggle {
  display: flex;
  justify-content: center;
  width: 100%;
  height: 18px;
  padding-top: 6px;
  background: #f5f7f9;
}
.ruler-toggle svg {
  width: 10px;
  height: 10px;
  fill: #a5abb9;
  stroke: #a5abb9;
}
.thumb {
  width: 12px;
  height: 42px;
  margin-top: 3px;
  border-radius: 6px;
  background: #d7d9e2;
}
.scroll-end {
  margin-top: auto;
  padding-bottom: 3px;
}
.square {
  width: 6px;
  height: 6px;
  border: 1px solid var(--caret);
}
.side {
  display: flex;
  flex-direction: column;
  align-items: center;
  width: 42px;
  padding: 11px 0 0 2px;
  border-left: 2px solid #dfe1e5;
}
.grip {
  width: 20px;
  height: 4px;
  margin-bottom: 11px;
  border: solid #c6c8cc;
  border-width: 1px 0;
}
.side button {
  height: 36px;
}
.side .apps {
  justify-content: center;
  width: 100%;
  height: 43px;
  margin-top: auto;
  padding-top: 6px;
  border-top: 1px solid #dfe1e5;
}

.statusbar {
  flex: none;
  display: flex;
  align-items: center;
  height: 30px;
  padding: 2px 10px 0 7px;
  border-top: 1px solid #e0e3e8;
  background: #f5f7f9;
}
.stat {
  display: flex;
  align-items: center;
  height: 16px;
  margin-right: 9px;
  padding-right: 4px;
  border-right: 1px solid #d8dbe1;
}
.spell {
  gap: 1px;
  margin-left: -1px;
  padding-right: 9px;
}
.side-caret {
  margin-left: 7px;
  border-width: 3px 0 3px 3px;
  border-color: transparent transparent transparent var(--caret);
}
.status-right {
  margin-left: auto;
}
.status-right .divider {
  height: 16px;
  margin: 0 11px 0 8px;
}
.view {
  justify-content: center;
  width: 24px;
  height: 24px;
  margin-right: 2px;
  border-radius: 2px;
}
.view.active {
  background: #dbe0e4;
}
.percent {
  gap: 4px;
  margin: 0 7px 0 5px;
}
input[type='range'] {
  width: 138px;
  height: 16px;
  margin: 0 7px;
  appearance: none;
  background: linear-gradient(90deg, #4b6189 50%, #d0d4e2 50%) center / 100% 1px no-repeat;
}
input[type='range']::-webkit-slider-thumb {
  appearance: none;
  width: 13px;
  height: 13px;
  border: 1px solid #444;
  border-radius: 50%;
  background: #f2f2f2;
}
input[type='range'] + button {
  margin-right: 5px;
}

.brand {
  position: absolute;
  z-index: 2;
  right: 30px;
  bottom: 18px;
  display: flex;
  gap: 10px;
  pointer-events: none;
  color: #3d3d3d;
}
.brand > svg {
  width: 84px;
  height: 58px;
  margin-top: 1px;
}
.brand-text {
  display: flex;
  flex-direction: column;
  width: 219px;
}
.brand-text strong {
  font: 500 31px/32px Inter, 'Open Sans', sans-serif;
  white-space: nowrap;
}
.brand-text span {
  font: 19px/28px 'Noto Sans', sans-serif;
  white-space: nowrap;
}
</style>
